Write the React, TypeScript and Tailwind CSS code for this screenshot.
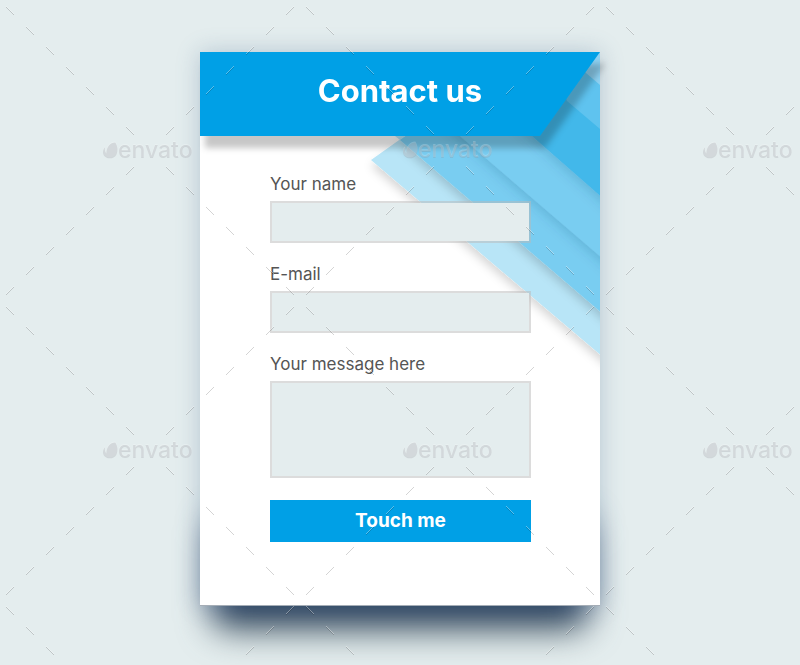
import { useState } from "react";

interface FieldProps {
  id: string;
  label: string;
  type: string;
  value: string;
  onChange: (value: string) => void;
}

const labelClass =
  "block h-6 mb-[5px] text-[17px] leading-6 text-[#555]";

const boxClass =
  "block w-full rounded-none border-2 border-[#b9b9b9]/50 bg-[#e4edee] bg-clip-padding px-3 text-base text-[#555] outline-none focus:border-[#00a0e6]";

function Field({ id, label, type, value, onChange }: FieldProps) {
  return (
    <div>
      <label htmlFor={id} className={labelClass}>
        {label}
      </label>
      <input
        id={id}
        type={type}
        value={value}
        onChange={(e) => onChange(e.target.value)}
        className={`${boxClass} h-[42px]`}
      />
    </div>
  );
}

// folded paper stripes in the top right corner of the card
function Stripes() {
  return (
    <svg
      aria-hidden="true"
      width="240"
      height="330"
      viewBox="-10 0 240 330"
      className="absolute top-0 right-0"
    >
      <defs>
        <filter id="fold" x="-20%" y="-20%" width="140%" height="140%">
          <feDropShadow
            dx="0"
            dy="6"
            stdDeviation="5"
            floodColor="#000"
            floodOpacity="0.16"
          />
        </filter>
        <filter id="soft-fold" x="-20%" y="-20%" width="140%" height="140%">
          <feDropShadow
            dx="0"
            dy="5"
            stdDeviation="6"
            floodColor="#004a70"
            floodOpacity="0.18"
          />
        </filter>
      </defs>
      <path
        d="M1 108 L153 0 H260 V328 Z"
        fill="#b8e5f7"
        filter="url(#fold)"
      />
      <path d="M25 84 L35 84 L30 88 Z" fill="#b8e5f7" />
      <path
        d="M30 88 L153 0 H260 V285 Z"
        fill="#79cdf1"
        filter="url(#fold)"
      />
      <path
        d="M90 84 L60 58 L140 0 H260 V230 Z"
        fill="#79cdf1"
        filter="url(#soft-fold)"
      />
      <path
        d="M162 84 L132 58 L180 20 H260 V170 Z"
        fill="#43b8ea"
        filter="url(#soft-fold)"
      />
      <path d="M197 49 L230 77 V0 H180 Z" fill="#5fc3ef" />
      <path d="M216 21 L230 33 V0 H200 Z" fill="#8fd2f3" />
    </svg>
  );
}

const dashes = [6, 26, 46, 66, 86, 106, 126, 166, 186, 206, 226, 246, 266, 286];

const falling = dashes.map((x) => `M${x} ${x + 1}l8 8`).join("");
const rising = dashes.map((x) => `M${x} ${301 - x}l8 -8`).join("");

function Watermark() {
  return (
    <svg
      aria-hidden="true"
      className="pointer-events-none absolute inset-0 h-full w-full"
    >
      <defs>
        <pattern
          id="watermark"
          width="300"
          height="300"
          patternUnits="userSpaceOnUse"
        >
          <g fill="none" strokeWidth="1">
            <path
              d={falling + rising}
              stroke="#fff"
              strokeOpacity="0.35"
              transform="translate(0 -1)"
            />
            <path d={falling + rising} stroke="#000" strokeOpacity="0.17" />
          </g>
          <g fill="#fff" fillOpacity="0.2" transform="translate(0 -1)">
            <Brand />
          </g>
          <g fill="#8b8b92" fillOpacity="0.24">
            <Brand />
          </g>
        </pattern>
      </defs>
      <rect width="100%" height="100%" fill="url(#watermark)" />
    </svg>
  );
}

function Brand() {
  return (
    <>
      <path d="M115.200 142.600C110 142.800 106.800 146.600 106.300 153.500C104.900 151.500 104.700 149.400 105 147.200C102.400 149.800 102.300 154 104.800 156.400C107.800 159.300 113.800 159.100 116.200 155C118.400 151.200 117.600 145.600 115.200 142.600Z" />
      <text
        x="118"
        y="158"
        className="font-['Inter',sans-serif] text-[23px] font-medium"
      >
        envato
      </text>
    </>
  );
}

export default function App() {
  const [name, setName] = useState("");
  const [email, setEmail] = useState("");
  const [message, setMessage] = useState("");

  return (
    <main className="relative min-h-screen overflow-hidden bg-[#e4edee] px-4 pt-[52px] pb-[59px] font-['Inter',sans-serif]">
      <div className="relative isolate mx-auto w-full max-w-[400px]">
        <div className="absolute inset-x-3 -bottom-6 -z-10 h-28 rounded-2xl bg-linear-to-b from-[#1a3158] from-70% to-[#4a5c60] blur-[17px]" />

        <section className="relative border-b border-[#a5adb6] bg-white shadow-[0_0_22px_rgba(80,115,150,0.32)]">
          <Stripes />

          <header className="relative drop-shadow-[5px_12px_3px_rgba(0,0,0,0.22)]">
            <div className="flex h-[84px] items-center justify-center bg-[#00a0e6] pb-1.5 [clip-path:polygon(0_0,100%_0,85%_100%,0_100%)]">
              <h1 className="text-[31px] leading-10 font-bold text-white">
                Contact us
              </h1>
            </div>
          </header>

          <form
            onSubmit={(e) => e.preventDefault()}
            className="relative flex flex-col gap-[19px] pt-9 pr-[69px] pb-[63px] pl-[70px]"
          >
            <Field
              id="name"
              label="Your name"
              type="text"
              value={name}
              onChange={setName}
            />

            <Field
              id="email"
              label="E-mail"
              type="email"
              value={email}
              onChange={setEmail}
            />

            <div>
              <label htmlFor="message" className={labelClass}>
                Your message here
              </label>
              <textarea
                id="message"
                value={message}
                onChange={(e) => setMessage(e.target.value)}
                className={`${boxClass} h-[97px] resize-none py-2`}
              />
            </div>

            <button
              type="submit"
              className="mt-[3px] h-[42px] cursor-pointer bg-[#00a0e6] text-[19px] font-bold text-white hover:bg-[#0092d4]"
            >
              Touch me
            </button>
          </form>
        </section>
      </div>

      <Watermark />
    </main>
  );
}
